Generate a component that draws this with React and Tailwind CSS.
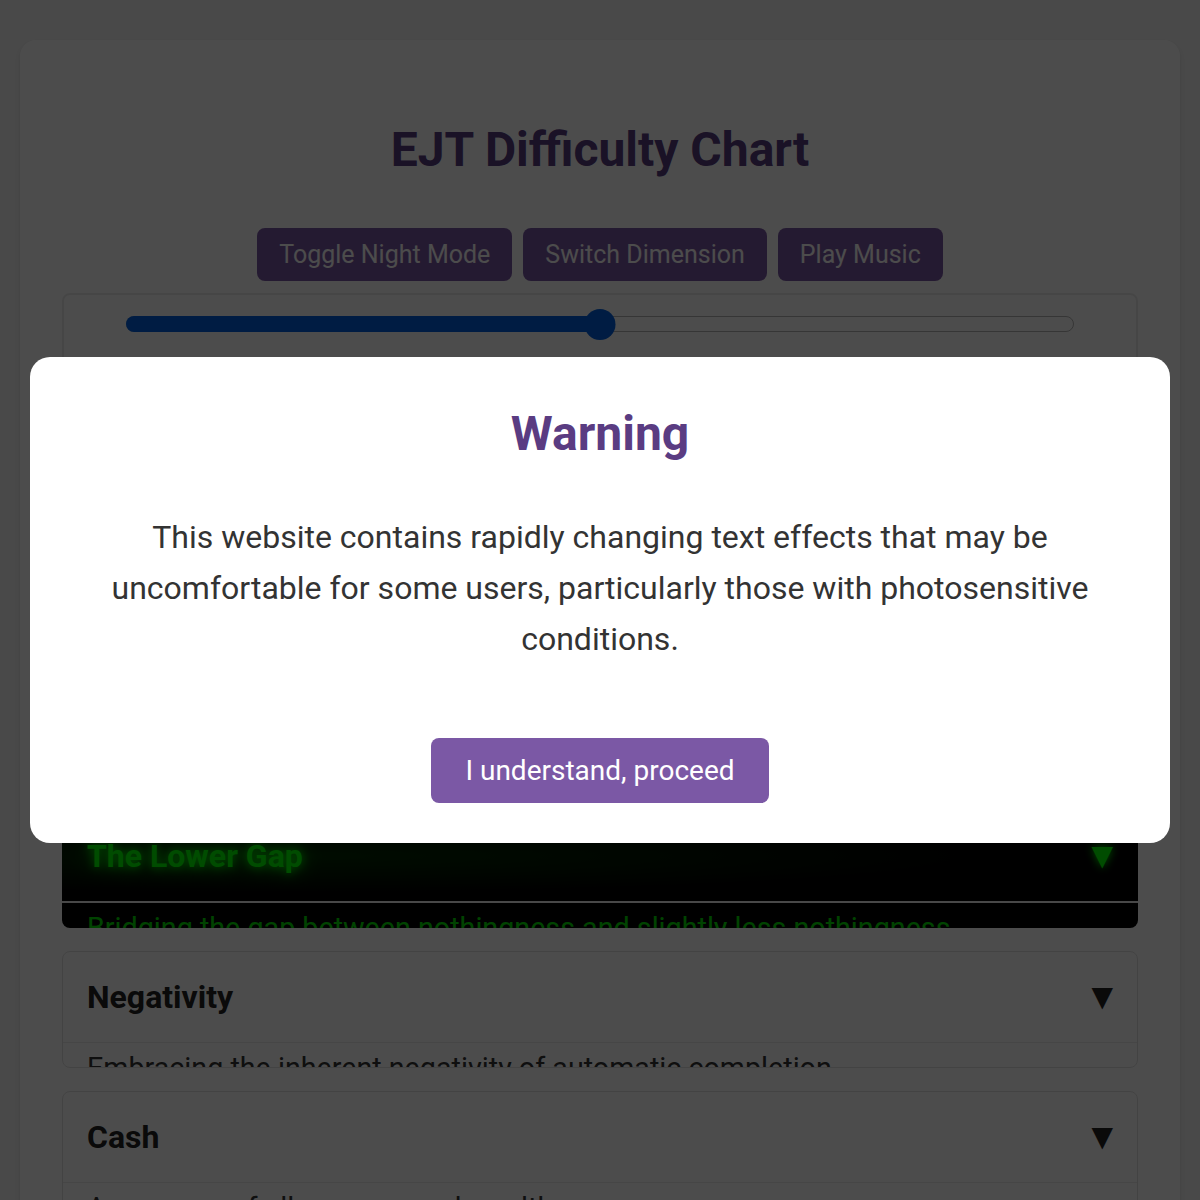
import React, { useState } from 'react';

const tiers = [
  { name: 'Beginnings', desc: 'Where every journey of automatic completion starts', glow: false },
  { name: 'Mild Confusion', desc: 'A gentle step into the unknown', glow: false },
  { name: 'The Void', desc: 'Staring into the abyss of incomplete tasks', glow: false },
  { name: 'The Lower Gap', desc: 'Bridging the gap between nothingness and slightly less nothingness', glow: true },
  { name: 'Negativity', desc: 'Embracing the inherent negativity of automatic completion', glow: false },
  { name: 'Cash', desc: 'A measure of all success and wealth', glow: false },
];

const Arrow = ({ className }) => (
  <span className={`font-['DejaVu_Sans',sans-serif] text-[28px] leading-none ${className}`}>▼</span>
);

const TierCard = ({ tier }) => {
  if (tier.glow) {
    return (
      <div className="h-[117px] overflow-hidden rounded-lg bg-black">
        <div className="flex h-[92px] items-center justify-between border-b-2 border-[#f0f0f0] bg-[radial-gradient(ellipse_at_20%_50%,#002a00,#000_60%)] px-[25px]">
          <h3 className="text-[32px] font-bold text-[#00ff00] [text-shadow:0_0_10px_#00ff00,0_0_20px_#00cc00]">{tier.name}</h3>
          <Arrow className="text-[#00ff00] [text-shadow:0_0_10px_#00ff00]" />
        </div>
        <p className="px-[25px] pt-[4px] text-[28.7px] text-[#00e000]">{tier.desc}</p>
      </div>
    );
  }
  return (
    <div className="h-[117px] overflow-hidden rounded-lg border border-[#e2e2e2] bg-white">
      <div className="flex h-[91px] items-center justify-between border-b border-[#ececec] px-6">
        <h3 className="text-[32px] font-bold text-[#222]">{tier.name}</h3>
        <Arrow className="text-[#222]" />
      </div>
      <p className="px-6 pt-[4px] text-[28.7px] text-[#333]">{tier.desc}</p>
    </div>
  );
};

const App = () => {
  const [accepted, setAccepted] = useState(false);
  const value = 50;

  return (
    <div className="h-[1200px] overflow-hidden bg-[#f3f3f3] pt-10 font-['Roboto','Liberation_Sans',sans-serif]">
      <div className="mx-5 rounded-2xl bg-white px-[42px] pt-[86px] pb-10 shadow-md">
        <h1 className="text-center text-[48px] leading-none font-bold text-[#573c80]">EJT Difficulty Chart</h1>

        <div className="mt-[54px] flex justify-center gap-[11px]">
          <button className="h-[53px] rounded-lg bg-[#7b58a5] px-[22px] text-[25px] text-white">Toggle Night Mode</button>
          <button className="h-[53px] rounded-lg bg-[#7b58a5] px-[22px] text-[25px] text-white">Switch Dimension</button>
          <button className="h-[53px] rounded-lg bg-[#7b58a5] px-[22px] text-[25px] text-white">Play Music</button>
        </div>

        <div className="mt-3 h-[75px] rounded-lg border-2 border-[#ececec] px-[62px] pt-[21px]">
          <div className="relative h-4 rounded-full border border-[#b5b5b5] bg-white">
            <div className="absolute top-[-1px] left-[-1px] h-4 rounded-full bg-[#0060df]" style={{ width: `${value}%` }} />
            <div
              className="absolute top-[-8.5px] h-[31px] w-[31px] -translate-x-1/2 rounded-full bg-[#0060df]"
              style={{ left: `${value}%` }}
            />
          </div>
        </div>

        <div className="mt-[23px] flex flex-col gap-[23px]">
          {tiers.map((t) => (
            <TierCard key={t.name} tier={t} />
          ))}
        </div>
      </div>

      {!accepted && (
        <div className="fixed inset-0 flex items-center justify-center bg-black/70">
          <div className="w-[95%] rounded-[20px] bg-white px-[55px] pt-[48px] pb-10 text-center">
            <h2 className="text-[48px] leading-[1.2] font-bold text-[#5a3c82]">Warning</h2>
            <p className="mt-[50px] text-[32px] leading-[51px] text-[#333]">
              This website contains rapidly changing text effects that may be uncomfortable for some users, particularly those with photosensitive conditions.
            </p>
            <button
              onClick={() => setAccepted(true)}
              className="mt-[73px] h-[65px] rounded-lg bg-[#7b58a5] px-[34px] text-[28px] text-white"
            >
              I understand, proceed
            </button>
          </div>
        </div>
      )}
    </div>
  );
};

export default App;
